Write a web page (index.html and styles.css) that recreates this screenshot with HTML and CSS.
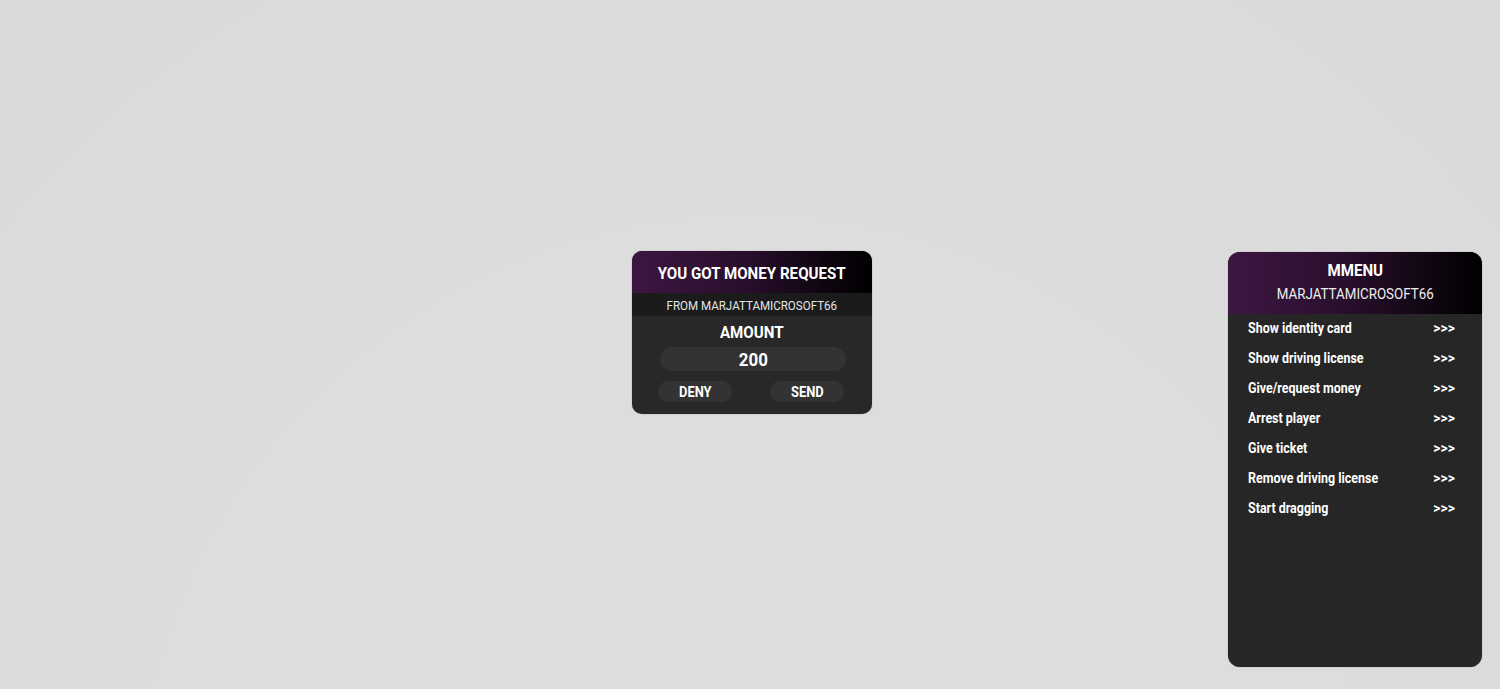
FILE: index.html
```html
<!DOCTYPE html>
<html>
<head>
<meta charset="utf-8">
<link rel="stylesheet" href="styles.css">
</head>
<body>
<div class="screen">
  <div class="request">
    <div class="req-head"><span class="cond">YOU GOT MONEY REQUEST</span></div>
    <div class="req-from"><span class="cond">FROM MARJATTAMICROSOFT66</span></div>
    <div class="req-body">
      <div class="req-label"><span class="cond">AMOUNT</span></div>
      <div class="req-amount"><span class="cond">200</span></div>
      <div class="req-actions">
        <button class="btn"><span class="cond">DENY</span></button>
        <button class="btn"><span class="cond">SEND</span></button>
      </div>
    </div>
  </div>
  <div class="menu">
    <div class="menu-head">
      <div class="menu-title"><span class="cond">MMENU</span></div>
      <div class="menu-user"><span class="cond">MARJATTAMICROSOFT66</span></div>
    </div>
    <ul class="menu-list">
      <li class="menu-item"><span class="cond left">Show identity card</span><span class="arrow">&gt;&gt;&gt;</span></li>
      <li class="menu-item"><span class="cond left">Show driving license</span><span class="arrow">&gt;&gt;&gt;</span></li>
      <li class="menu-item"><span class="cond left">Give/request money</span><span class="arrow">&gt;&gt;&gt;</span></li>
      <li class="menu-item"><span class="cond left">Arrest player</span><span class="arrow">&gt;&gt;&gt;</span></li>
      <li class="menu-item"><span class="cond left">Give ticket</span><span class="arrow">&gt;&gt;&gt;</span></li>
      <li class="menu-item"><span class="cond left">Remove driving license</span><span class="arrow">&gt;&gt;&gt;</span></li>
      <li class="menu-item"><span class="cond left">Start dragging</span><span class="arrow">&gt;&gt;&gt;</span></li>
    </ul>
  </div>
</div>
</body>
</html>
```
FILE: styles.css
```css
html, body {
  margin: 0;
  padding: 0;
  height: 100%;
}
body {
  font-family: Roboto, "Liberation Sans", sans-serif;
  color: #fff;
  background: #d9dad9;
  overflow: hidden;
}
.screen {
  position: relative;
  width: 1500px;
  height: 689px;
  background:
    radial-gradient(circle at 750px 829px,
      #dcdddc 0, #dcdddc 616px,
      #dbdcdb 618px, #dadbda 960px,
      #d9dad9 962px, #d8d9d8 1300px);
}
.cond {
  display: inline-block;
  transform: scaleX(0.89);
  white-space: nowrap;
}
.cond.left {
  transform-origin: left center;
}
.request {
  position: absolute;
  left: 632px;
  top: 251px;
  width: 240px;
  border-radius: 10px;
  overflow: hidden;
  background: #282828;
  box-shadow: 0 0 1px rgba(0,0,0,0.5);
}
.req-head {
  height: 42px;
  display: flex;
  align-items: center;
  justify-content: center;
  background: linear-gradient(90deg, #3d1642 0%, #2a0f2d 45%, #000 100%);
  font-weight: 700;
  font-size: 17px;
  padding-top: 1px;
  box-sizing: border-box;
}
.req-from {
  height: 23px;
  display: flex;
  align-items: center;
  justify-content: center;
  background: #1b1b1b;
  font-size: 13px;
  color: #e6e6e6;
  padding-top: 2px;
  box-sizing: border-box;
}
.req-body {
  display: flex;
  flex-direction: column;
  align-items: center;
  padding: 5px 0 12px;
}
.req-label {
  font-weight: 700;
  font-size: 17px;
  line-height: 22px;
}
.req-amount {
  margin-top: 4px;
  margin-left: 2px;
  width: 186px;
  height: 24px;
  border-radius: 12px;
  background: #333;
  display: flex;
  align-items: center;
  justify-content: center;
  font-weight: 700;
  font-size: 19px;
}
.req-actions {
  margin-top: 10px;
  margin-right: 2px;
  width: 186px;
  display: flex;
  justify-content: space-between;
}
.btn {
  width: 74px;
  height: 21px;
  border: 0;
  border-radius: 10px;
  background: #333;
  color: #fff;
  font-family: inherit;
  font-weight: 700;
  font-size: 14.5px;
  padding: 1px 0 0;
}
.menu {
  position: absolute;
  left: 1228px;
  top: 252px;
  width: 254px;
  height: 415px;
  border-radius: 12px;
  overflow: hidden;
  background: #262626;
  box-shadow: 0 0 1px rgba(0,0,0,0.5);
}
.menu-head {
  height: 62px;
  display: flex;
  flex-direction: column;
  align-items: center;
  justify-content: center;
  background: linear-gradient(90deg, #3d1642 0%, #2a0f2d 45%, #000 100%);
}
.menu-title {
  font-weight: 700;
  font-size: 17px;
  line-height: 20px;
  margin-top: -2px;
}
.menu-user {
  font-size: 15px;
  line-height: 20px;
  margin-top: 4px;
  color: #eee;
}
.menu-list {
  list-style: none;
  margin: 0;
  padding: 0 27px 0 20px;
}
.menu-item {
  height: 30px;
  box-sizing: border-box;
  padding-bottom: 2px;
  display: flex;
  align-items: center;
  justify-content: space-between;
  font-weight: 700;
  font-size: 14px;
}
.arrow {
  font-size: 14px;
}
```
